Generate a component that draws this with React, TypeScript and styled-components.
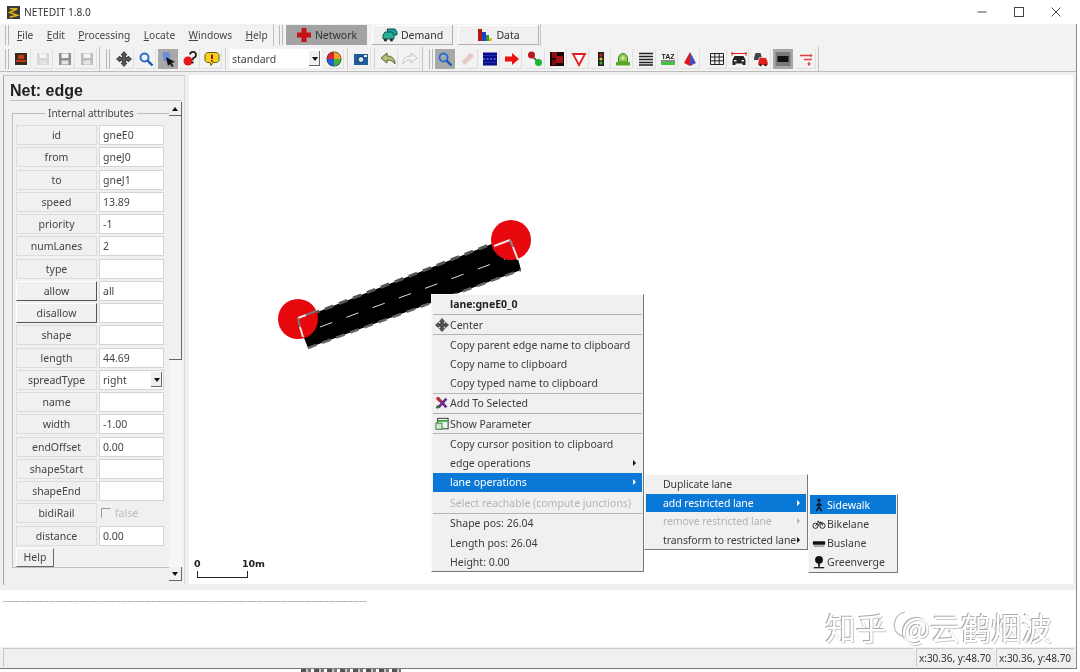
import React, { FC, ReactNode } from "react";
import styled, { createGlobalStyle } from "styled-components";

const GlobalStyle = createGlobalStyle`
  html, body {
    margin: 0;
    padding: 0;
    background: #ffffff;
  }
  body {
    font-family: "Noto Sans", "Liberation Sans", sans-serif;
    font-size: 11px;
    color: #2b2b2b;
  }
`;

const ATTRIBUTES: { name: string; value?: string; raised?: boolean; kind?: "select" | "check" }[] = [
  { name: "id", value: "gneE0" },
  { name: "from", value: "gneJ0" },
  { name: "to", value: "gneJ1" },
  { name: "speed", value: "13.89" },
  { name: "priority", value: "-1" },
  { name: "numLanes", value: "2" },
  { name: "type" },
  { name: "allow", value: "all", raised: true },
  { name: "disallow", raised: true },
  { name: "shape" },
  { name: "length", value: "44.69" },
  { name: "spreadType", value: "right", kind: "select" },
  { name: "name" },
  { name: "width", value: "-1.00" },
  { name: "endOffset", value: "0.00" },
  { name: "shapeStart" },
  { name: "shapeEnd" },
  { name: "bidiRail", value: "false", kind: "check" },
  { name: "distance", value: "0.00" },
];

const Icon: FC<{ children: ReactNode }> = ({ children }) => (
  <svg width="16" height="16" viewBox="0 0 16 16">
    {children}
  </svg>
);

const MoveGlyph = () => (
  <Icon>
    <path d="M8 0.5l3 3.5H9.5v2.5H12V5l3.5 3L12 11V9.5H9.5V12H11l-3 3.5L5 12h1.5V9.5H4V11L0.5 8 4 5v1.5h2.5V4H5z" fill="#555" stroke="#222" strokeWidth=".7" />
  </Icon>
);
const DiskGlyph: FC<{ tone: string }> = ({ tone }) => (
  <Icon>
    <rect x="2" y="2" width="12" height="12" fill={tone} />
    <rect x="4.5" y="2.5" width="7" height="4.5" fill="#f4f4f4" />
    <rect x="4.5" y="9.5" width="7" height="4" fill="#e4e4e4" />
  </Icon>
);
const SearchGlyph = () => (
  <Icon>
    <circle cx="6.5" cy="6.5" r="4" fill="none" stroke="#2a6fd0" strokeWidth="2" />
    <path d="M9.5 9.5l5 5" stroke="#1f55b5" strokeWidth="2.4" />
  </Icon>
);

const BarIcons: ReactNode[] = [
  <Icon key="a"><rect x="2" y="2" width="12" height="12" fill="#3a2a18" /><rect x="5" y="4" width="6" height="4" fill="#c23a1a" /><rect x="3" y="9" width="10" height="2" fill="#c23a1a" /></Icon>,
  <DiskGlyph key="b" tone="#d6d6d6" />,
  <DiskGlyph key="c" tone="#8f8f8f" />,
  <DiskGlyph key="d" tone="#bdbdbd" />,
];
const ViewIcons: ReactNode[] = [
  <MoveGlyph key="a" />,
  <SearchGlyph key="b" />,
  <Icon key="c"><path d="M3 1h6l2 5-2 1v3H3z" fill="#6f8ed8" /><path d="M6 6l9 5-3.5 1 2 3-1.5 1-2-3-2 2z" fill="#111" /></Icon>,
  <Icon key="d"><circle cx="6" cy="10" r="4.5" fill="#e01818" /><path d="M8 3.5a3 3 0 1 1 3.5 3.4L10.5 9" fill="none" stroke="#222" strokeWidth="1.8" /><rect x="9.5" y="10.5" width="2" height="2" fill="#222" /></Icon>,
  <Icon key="e"><path d="M3 1.5h10l2 2v6l-2 2H9l-2 3-1-3H3l-2-2v-6z" fill="#f2d21e" stroke="#6b5b10" /><rect x="7" y="3.5" width="2" height="4.5" fill="#b01010" /><rect x="7" y="9" width="2" height="1.6" fill="#b01010" /></Icon>,
];
const EditIcons: ReactNode[] = [
  <Icon key="a"><path d="M2 10l8-8 4 3-8 8H4z" fill="#e9c6c8" /><path d="M2 10l4 3-2 1z" fill="#cfd0d4" /></Icon>,
  <Icon key="b"><rect x="1" y="1.5" width="14" height="13" fill="#0a0a8c" /><path d="M1 8h14" stroke="#7fa8f4" strokeDasharray="2 1.5" /><path d="M1 4.5h14M1 11.5h14" stroke="#2030b0" /></Icon>,
  <Icon key="c"><path d="M1 5.5h7V2l7 6-7 6v-3.5H1z" fill="#f01010" /></Icon>,
  <Icon key="d"><path d="M4 4l9 9" stroke="#333" strokeWidth="1.4" /><circle cx="4.5" cy="4" r="3.5" fill="#b81818" /><circle cx="11.5" cy="11.5" r="3.5" fill="#18b830" /></Icon>,
  <Icon key="e"><rect x="1" y="1" width="14" height="14" fill="#1a0808" /><rect x="3" y="1" width="5" height="6" fill="#8c1010" /><rect x="7" y="5" width="7" height="7" fill="#a01414" /><rect x="3" y="9" width="4" height="5" fill="#7c0c0c" /></Icon>,
  <Icon key="f"><path d="M2 3h12L8 14z" fill="#fff" stroke="#e02020" strokeWidth="1.8" /></Icon>,
  <Icon key="g"><rect x="5" y="1" width="6" height="14" fill="#222" /><circle cx="8" cy="4" r="1.6" fill="#d02020" /><circle cx="8" cy="8" r="1.6" fill="#e0c020" /><circle cx="8" cy="12" r="1.6" fill="#20c020" /></Icon>,
  <Icon key="h"><path d="M3.5 11V7a4.500 4.500 0 0 1 9 0v4z" fill="#8cc850" stroke="#4c8c20" /><circle cx="8" cy="7" r="1.8" fill="#d8e8a0" /><rect x="1" y="11" width="14" height="3.5" fill="#58a828" /></Icon>,
  <Icon key="i"><path d="M1 2.5h14M1 5.5h14M1 8.500h14M1 11.5h14M1 14h14" stroke="#222" strokeWidth="1.5" /></Icon>,
  <Icon key="j"><rect x="1" y="11" width="14" height="3" fill="#3cc83c" /><path d="M1 10h14" stroke="#222" /><text x="8" y="8" textAnchor="middle" fontSize="7" fontWeight="700" fontFamily="Liberation Sans" fill="#222">TAZ</text></Icon>,
  <Icon key="k"><path d="M8 1l6 11-6 3z" fill="#3f4fc0" /><path d="M8 1L2 12l6 3z" fill="#e01a1a" /></Icon>,
];
const DataIcons: ReactNode[] = [
  <Icon key="a"><path d="M1.5 2.5h13v11h-13zM1.5 6h13M1.5 9.8h13M5.8 2.5v11M10.2 2.5v11" fill="none" stroke="#222" /></Icon>,
  <Icon key="b"><path d="M1 1v3.5M15 1v3.5M1 2.5h14" stroke="#e02020" strokeWidth="1.2" /><path d="M1.5 9l2-4h9l2 4v5h-3v-1.5h-7V14h-3z" fill="#222" /><rect x="3" y="9" width="2.5" height="1.5" fill="#eee" /><rect x="10.5" y="9" width="2.5" height="1.5" fill="#eee" /></Icon>,
  <Icon key="c"><path d="M1 7l1.5-5h5L9 7v2H1z" fill="#444" /><path d="M5 11l1.5-4.5h6.5L15 11v3.5H5z" fill="#e02020" stroke="#fff" strokeWidth=".6" /><circle cx="7.5" cy="14" r="1.2" fill="#222" /><circle cx="12.5" cy="14" r="1.2" fill="#222" /></Icon>,
  <Icon key="d"><rect x="0.5" y="1" width="15" height="14" fill="#7a7a7a" /><rect x="2.5" y="5" width="11" height="6" fill="#111" /></Icon>,
  <Icon key="e"><path d="M2 4.5h12M6 8.5h8M11 11v3" stroke="#e04040" strokeWidth="1.4" /><path d="M12.5 2.5l2 2-2 2zM9 12.5h4L11 15z" fill="#e04040" /></Icon>,
];

const App: FC = () => (
  <>
    <GlobalStyle />
    <Page>
      <Window>
        <TitleBar>
          <AppBadge viewBox="0 0 14 14">
            <rect width="14" height="14" fill="#3c3a34" />
            <path d="M3 3h8M11 3L3 7l8 3-8 2" fill="none" stroke="#d8b420" strokeWidth="1.8" />
          </AppBadge>
          <AppName>NETEDIT 1.8.0</AppName>
          <WindowControls>
            <svg width="12" height="12" viewBox="0 0 12 12"><path d="M1.5 6h9" stroke="#444" /></svg>
            <svg width="12" height="12" viewBox="0 0 12 12"><rect x="1.5" y="1.5" width="9" height="9" fill="none" stroke="#444" /></svg>
            <svg width="12" height="12" viewBox="0 0 12 12"><path d="M1.5 1.5l9 9M10.5 1.5l-9 9" stroke="#444" /></svg>
          </WindowControls>
        </TitleBar>

        <MenuBar>
          <BarGroup>
            <Grip />
            <MenuEntry><u>F</u>ile</MenuEntry>
            <MenuEntry><u>E</u>dit</MenuEntry>
            <MenuEntry><u>P</u>rocessing</MenuEntry>
            <MenuEntry><u>L</u>ocate</MenuEntry>
            <MenuEntry><u>W</u>indows</MenuEntry>
            <MenuEntry><u>H</u>elp</MenuEntry>
          </BarGroup>
          <SuperModes>
            <Grip />
            <ModeButton $active>
              <svg width="16" height="16" viewBox="0 0 16 16"><path d="M5.5 1h5v4.5H15v5h-4.5V15h-5v-4.5H1v-5h4.5z" fill="#c8101a" /></svg>
              Network
            </ModeButton>
            <ModeButton>
              <svg width="16" height="16" viewBox="0 0 16 16"><path d="M5 2h8l2 3v3H7z" fill="#18a0a0" stroke="#0b5050" /><path d="M1 8l2-3h7l2 3v4H1z" fill="#28b090" stroke="#0b5050" /><circle cx="3.5" cy="13" r="1.5" fill="#222" /><circle cx="9.5" cy="13" r="1.5" fill="#222" /></svg>
              Demand
            </ModeButton>
            <ModeButton>
              <svg width="16" height="16" viewBox="0 0 16 16"><rect x="1" y="2" width="4" height="12" fill="#b01818" /><rect x="5" y="5" width="4" height="9" fill="#2040c0" /><rect x="9" y="8" width="3" height="6" fill="#20a030" /><rect x="12" y="11" width="3" height="3" fill="#e0c020" /></svg>
              Data
            </ModeButton>
          </SuperModes>
        </MenuBar>

        <ToolBar>
          <ToolGrip />
          <ToolGroup>
            {BarIcons.map((icon, i) => <ToolButton key={i}>{icon}</ToolButton>)}
          </ToolGroup>
          <ToolDivider />
          <ToolGrip />
          <ViewGroup>
            {ViewIcons.map((icon, i) => <ToolButton key={i} $active={i === 2}>{icon}</ToolButton>)}
          </ViewGroup>
          <ToolRule />
          <SchemeSelect>
            <span>standard</span>
            <SelectArrow><Triangle /></SelectArrow>
          </SchemeSelect>
          <ToolButton>
            <svg width="16" height="16" viewBox="0 0 16 16">
              <circle cx="8" cy="8" r="7.5" fill="#222" />
              <path d="M8 8V1a7 7 0 0 1 7 7z" fill="#f0a020" />
              <path d="M8 8h7a7 7 0 0 1-7 7z" fill="#40b040" />
              <path d="M8 8v7a7 7 0 0 1-7-7z" fill="#2060d0" />
              <path d="M8 8H1a7 7 0 0 1 7-7z" fill="#e02030" />
            </svg>
          </ToolButton>
          <ToolRule />
          <ToolButton>
            <svg width="16" height="16" viewBox="0 0 16 16"><rect x="1" y="3" width="14" height="11" fill="#1f5c9c" /><circle cx="8" cy="8.5" r="3" fill="#cfe4f8" stroke="#0c3060" /><rect x="11" y="4" width="3" height="2" fill="#e8f0f8" /></svg>
          </ToolButton>
          <ToolRule />
          <ToolButton>
            <svg width="16" height="16" viewBox="0 0 16 16"><path d="M1 7l6-5v3c5 0 8 3 8 8-2-3-4-4-8-4v3z" fill="#b8c078" stroke="#5a6030" /></svg>
          </ToolButton>
          <ToolButton>
            <svg width="16" height="16" viewBox="0 0 16 16"><path d="M15 7L9 2v3C4 5 1 8 1 13c2-3 4-4 8-4v3z" fill="#f4f4f4" stroke="#c4c4c4" /></svg>
          </ToolButton>
          <ToolDivider />
          <ToolGrip />
          <ToolButton $active><SearchGlyph /></ToolButton>
          <EditGroup>
            {EditIcons.map((icon, i) => <ToolButton key={i}>{icon}</ToolButton>)}
          </EditGroup>
          <DataGroup>
            {DataIcons.map((icon, i) => <ToolButton key={i} $active={i === 3}>{icon}</ToolButton>)}
          </DataGroup>
          <ToolDivider />
        </ToolBar>

        <Body>
          <SidePanel>
            <PanelTitle>Net: edge</PanelTitle>
            <PanelScroller>
              <AttributesBox>
                <legend>Internal attributes</legend>
                {ATTRIBUTES.map((attr) => (
                  <AttrRow key={attr.name}>
                    <AttrLabel $raised={attr.raised}>{attr.name}</AttrLabel>
                    {attr.kind === "check" ? (
                      <CheckValue><CheckMark />{attr.value}</CheckValue>
                    ) : (
                      <AttrValue>
                        {attr.value}
                        {attr.kind === "select" && <SelectArrow><Triangle /></SelectArrow>}
                      </AttrValue>
                    )}
                  </AttrRow>
                ))}
                <HelpButton>Help</HelpButton>
              </AttributesBox>
              <ScrollBar>
                <ScrollButton><Triangle $up /></ScrollButton>
                <ScrollThumb />
                <ScrollTrack />
                <ScrollButton><Triangle /></ScrollButton>
              </ScrollBar>
            </PanelScroller>
          </SidePanel>

          <Canvas>
            <RoadDrawing viewBox="189 75 884 509" width="884" height="509">
              <path d="M297 320L512 236L521 270L308 348Z" fill="#000" />
              <path d="M297 320L512 236" stroke="#555" strokeWidth="3" strokeDasharray="9 6" />
              <path d="M308 348L521 270" stroke="#666" strokeWidth="2.5" strokeDasharray="9 6" />
              <path d="M320 327L505 259" stroke="#ddd" strokeWidth="1" strokeDasharray="13 15" />
              <circle cx="298" cy="319" r="20" fill="#e6080d" />
              <circle cx="511" cy="240" r="20" fill="#e6080d" />
              <path d="M298 318l8-3" stroke="#f4e4e4" strokeWidth="2" />
              <path d="M306 315l10-4" stroke="#777" strokeWidth="2" />
              <path d="M298 318l2 9" stroke="#777" strokeWidth="2" />
              <path d="M300 327l3 10" stroke="#f4e4e4" strokeWidth="2" />
              <path d="M494 246l16-6" stroke="#f4e4e4" strokeWidth="2" />
              <path d="M510 240l3 7" stroke="#888" strokeWidth="2" />
              <path d="M513 247l5 13" stroke="#f4e4e4" strokeWidth="2" />
            </RoadDrawing>
            <ScaleBar>
              <ScaleLabels><span>0</span><span>10m</span></ScaleLabels>
              <ScaleLine />
            </ScaleBar>
          </Canvas>

          <Menu $left={431} $top={294} $width={213}>
            <MenuTitle>lane:gneE0_0</MenuTitle>
            <MenuRule />
            <MenuItem $icon>
              <ItemIcon><MoveGlyph /></ItemIcon>Center
            </MenuItem>
            <MenuRule />
            <MenuItem>Copy parent edge name to clipboard</MenuItem>
            <MenuItem>Copy name to clipboard</MenuItem>
            <MenuItem>Copy typed name to clipboard</MenuItem>
            <MenuRule />
            <MenuItem $icon>
              <ItemIcon>
                <Icon><path d="M3 2l10 11M13 3L4 13" stroke="#6a2a90" strokeWidth="3" /><path d="M2 2l4 4" stroke="#c03020" strokeWidth="3" /><path d="M4 11l-2 3" stroke="#208030" strokeWidth="3" /></Icon>
              </ItemIcon>
              Add To Selected
            </MenuItem>
            <MenuRule />
            <MenuItem $icon>
              <ItemIcon>
                <Icon><rect x="3" y="1.5" width="12" height="12" fill="#e8f4e8" stroke="#222" /><path d="M3 4.5h12" stroke="#40a040" strokeWidth="2" /><rect x="1" y="7" width="7" height="7" fill="#d0e8d0" stroke="#308030" /></Icon>
              </ItemIcon>
              Show Parameter
            </MenuItem>
            <MenuRule />
            <MenuItem>Copy cursor position to clipboard</MenuItem>
            <MenuItem $arrow>edge operations</MenuItem>
            <MenuItem $selected $arrow>lane operations</MenuItem>
            <MenuRule $gap />
            <MenuItem $disabled>Select reachable (compute junctions)</MenuItem>
            <MenuRule />
            <MenuItem>Shape pos: 26.04</MenuItem>
            <MenuItem>Length pos: 26.04</MenuItem>
            <MenuItem>Height: 0.00</MenuItem>
          </Menu>

          <SubMenu $left={644} $top={474} $width={164}>
            <MenuItem>Duplicate lane</MenuItem>
            <MenuItem $selected $arrow>add restricted lane</MenuItem>
            <MenuItem $disabled $arrow>remove restricted lane</MenuItem>
            <MenuItem $arrow>transform to restricted lane</MenuItem>
          </SubMenu>

          <Menu $left={808} $top={494} $width={90}>
            <MenuItem $selected $icon>
              <ItemIcon>
                <Icon><circle cx="8" cy="2.5" r="1.8" fill="#111" /><path d="M8 5v5M8 6l-3 3M8 6l3 3M8 10l-3 5M8 10l3 5" stroke="#111" strokeWidth="1.6" fill="none" /></Icon>
              </ItemIcon>
              Sidewalk
            </MenuItem>
            <MenuItem $icon>
              <ItemIcon>
                <Icon><circle cx="4" cy="10" r="3" fill="none" stroke="#111" /><circle cx="12" cy="10" r="3" fill="none" stroke="#111" /><path d="M4 10l3-4h4l1 4M6 5h2M7 10l3-4" stroke="#111" fill="none" /></Icon>
              </ItemIcon>
              Bikelane
            </MenuItem>
            <MenuItem $icon>
              <ItemIcon>
                <Icon><rect x="1" y="6" width="14" height="4" rx="1" fill="#111" /><path d="M2 11.5h12" stroke="#555" /></Icon>
              </ItemIcon>
              Buslane
            </MenuItem>
            <MenuItem $icon>
              <ItemIcon>
                <Icon><circle cx="8" cy="5.5" r="4.5" fill="#111" /><path d="M8 9v4.5" stroke="#111" strokeWidth="2" /><path d="M2 14.5h12" stroke="#111" strokeWidth="1.4" /></Icon>
              </ItemIcon>
              Greenverge
            </MenuItem>
          </Menu>
        </Body>

        <Messages>
          <MessageLine>{"-".repeat(152)}</MessageLine>
          <Watermark>
            <WatermarkSwirl viewBox="0 0 18 30" width="18" height="30">
              <path d="M14 2C5 4 2 12 4 20c2 4 6 6 10 7" fill="none" stroke="#bbb" strokeWidth="1.2" />
            </WatermarkSwirl>
            知乎 @云鹤烟波
          </Watermark>
        </Messages>

        <StatusBar>
          <StatusFill />
          <StatusCell>x:30.36, y:48.70</StatusCell>
          <StatusCell>x:30.36, y:48.70</StatusCell>
        </StatusBar>
      </Window>
      <CutOffStrip />
    </Page>
  </>
);

export default App;

const Page = styled.div`
  width: 1080px;
  height: 672px;
  overflow: hidden;
  background: #ffffff;
  filter: blur(0.3px);
`;

const Window = styled.div`
  width: 1077px;
  height: 669px;
  display: flex;
  flex-direction: column;
  background: #f0f0f0;
  border-right: 1px solid #8a8a8a;
  border-bottom: 1px solid #777;
  box-sizing: border-box;
`;

const CutOffStrip = styled.div`
  width: 100px;
  height: 3px;
  margin-left: 301px;
  background: repeating-linear-gradient(90deg, #555 0 5px, #c8c8c8 5px 7px, #777 7px 10px, #ffffff 10px 13px);
`;

const TitleBar = styled.div`
  flex: 0 0 24px;
  display: flex;
  align-items: center;
  background: #ffffff;
  padding-left: 7px;
  width: 1080px;
  box-sizing: border-box;
`;

const AppBadge = styled.svg`
  width: 13px;
  height: 13px;
  margin-right: 4px;
`;

const AppName = styled.span`
  font-size: 10.2px;
  color: #333;
`;

const WindowControls = styled.div`
  margin-left: auto;
  display: flex;
  gap: 25px;
  padding-right: 18px;
  align-items: center;
`;

const MenuBar = styled.div`
  flex: 0 0 22px;
  display: flex;
  align-items: center;
  background: #f2f2f2;
  box-sizing: border-box;
  padding-left: 5px;
`;

const BarGroup = styled.div`
  display: flex;
  align-items: center;
  height: 100%;
  width: 268px;
  border-right: 1px solid #c4c4c4;
`;

const SuperModes = styled.div`
  display: flex;
  align-items: center;
  height: 100%;
  padding-left: 5px;
  gap: 5px;
  border-right: 1px solid #c4c4c4;
  padding-right: 1px;

  > :first-child {
    margin-right: -2px;
  }
`;

const Grip = styled.div`
  flex: none;
  width: 2px;
  height: 20px;
  border-left: 1px solid #b8b8b8;
  border-right: 1px solid #b8b8b8;
  margin-right: 3px;
`;

const ToolGrip = styled(Grip)`
  margin-right: 1px;
`;

const MenuEntry = styled.span`
  padding: 0 5px;
  font-size: 10.2px;
  color: #444;
  margin-right: 3.4px;
`;

const ModeButton = styled.button<{ $active?: boolean }>`
  width: 81px;
  height: 20px;
  display: flex;
  align-items: center;
  justify-content: center;
  gap: 3px;
  padding: 0;
  font: inherit;
  font-size: 10.5px;
  color: #333;
  border: none;
  background: ${(props) => (props.$active ? "#a3a3a3" : "#f0f0f0")};
  box-shadow: ${(props) =>
    props.$active ? "none" : "inset -1px -1px 0 #b0b0b0, inset 1px 1px 0 #ffffff"};
`;

const ToolBar = styled.div`
  flex: 0 0 26px;
  display: flex;
  align-items: center;
  padding-left: 5px;
  box-sizing: border-box;
  background: #f2f2f2;
  border-bottom: 1px solid #bdbdbd;
`;

const ToolGroup = styled.div`
  display: flex;
  align-items: center;
`;

const ViewGroup = styled(ToolGroup)`
  margin-left: 2px;
`;

const EditGroup = styled(ToolGroup)`
  margin-left: 1px;
  gap: 0.2px;
`;

const DataGroup = styled(ToolGroup)`
  margin-left: 5px;
  gap: 0.2px;
`;

const ToolDivider = styled.div`
  flex: none;
  width: 0;
  height: 24px;
  border-right: 1px solid #c0c0c0;
  margin: 0 6px 0 1px;
`;

const ToolRule = styled.div`
  flex: none;
  width: 0;
  height: 22px;
  border-right: 1px solid #d0d0d0;
  margin: 0 2px;
`;

const ToolButton = styled.div<{ $active?: boolean }>`
  flex: none;
  width: 22px;
  height: 22px;
  box-sizing: border-box;
  display: flex;
  align-items: center;
  justify-content: center;
  border: 1px solid transparent;
  background-clip: padding-box;
  background-color: ${(props) => (props.$active ? "#a8a8a8" : "transparent")};
  box-shadow: ${(props) => (props.$active ? "none" : "inset -1px -1px 0 #e0e0e0")};
`;

const SchemeSelect = styled.div`
  flex: none;
  width: 91px;
  height: 19px;
  margin: 0 2px;
  box-sizing: border-box;
  display: flex;
  align-items: center;
  justify-content: space-between;
  padding-left: 2px;
  background: #ffffff;
  color: #444;
  font-size: 10.5px;
`;

const SelectArrow = styled.span`
  width: 11px;
  height: 15px;
  margin-right: 1px;
  display: flex;
  align-items: center;
  justify-content: center;
  background: #f0f0f0;
  box-shadow: inset -1px -1px 0 #666;
`;

const Triangle = styled.span<{ $up?: boolean }>`
  width: 0;
  height: 0;
  border-left: 3.5px solid transparent;
  border-right: 3.5px solid transparent;
  ${(props) =>
    props.$up ? "border-bottom: 4px solid #111;" : "border-top: 4px solid #111;"}
`;

const Body = styled.div`
  flex: 0 0 518px;
  position: relative;
  display: flex;
  align-items: flex-start;
  padding-top: 3px;
  box-sizing: border-box;
`;

const SidePanel = styled.div`
  width: 182px;
  height: 510px;
  margin-left: 3px;
  box-sizing: border-box;
  border-left: 1px solid #a8a8a8;
  border-top: 1px solid #c8c8c8;
  border-right: 1px solid #d8d8d8;
  flex: none;
`;

const PanelTitle = styled.div`
  font-family: "Liberation Sans", sans-serif;
  font-size: 16px;
  font-weight: 700;
  color: #222;
  height: 24px;
  line-height: 29px;
  margin: 0 3px 0 6px;
  border-bottom: 1px solid #c0c0c0;
`;

const PanelScroller = styled.div`
  display: flex;
  padding-left: 8px;
  padding-top: 1px;
  height: 479px;
`;

const AttributesBox = styled.fieldset`
  flex: none;
  width: 157px;
  height: 461px;
  margin: 5px 0 0;
  padding: 6px 0 0 3px;
  box-sizing: border-box;
  border: 1px solid #bdbdbd;
  border-right: none;
  min-width: 0;

  legend {
    font-size: 10px;
    color: #444;
    padding: 0 3px;
    margin-left: 29px;
    line-height: 12px;
  }
`;

const AttrRow = styled.div`
  display: flex;
  gap: 2px;
  height: 20px;
  margin-bottom: 2.25px;
`;

const AttrLabel = styled.div<{ $raised?: boolean }>`
  width: 81px;
  box-sizing: border-box;
  display: flex;
  align-items: center;
  justify-content: center;
  font-size: 10.5px;
  color: #444;
  background: #f0f0f0;
  border: 1px solid #dcdcdc;
  ${(props) => props.$raised && "border-color: #ffffff #555 #555 #ffffff;"}
`;

const AttrValue = styled.div`
  width: 65px;
  box-sizing: border-box;
  display: flex;
  align-items: center;
  justify-content: space-between;
  padding-left: 3px;
  font-size: 10.5px;
  color: #444;
  background: #ffffff;
  border: 1px solid #d4d4d4;
`;

const CheckValue = styled.div`
  width: 65px;
  display: flex;
  align-items: center;
  gap: 4px;
  padding-left: 2px;
  font-size: 10.5px;
  color: #bcbcbc;
`;

const CheckMark = styled.span`
  width: 8px;
  height: 8px;
  border-left: 1px solid #9a9a9a;
  border-top: 1px solid #9a9a9a;
  border-right: 1px solid #eee;
  border-bottom: 1px solid #eee;
`;

const HelpButton = styled.div`
  width: 38px;
  height: 19px;
  margin-top: 1px;
  box-sizing: border-box;
  display: flex;
  align-items: center;
  justify-content: center;
  font-size: 10.5px;
  color: #444;
  border: 1px solid;
  border-color: #ffffff #666 #666 #ffffff;
`;

const ScrollBar = styled.div`
  flex: none;
  width: 13px;
  display: flex;
  flex-direction: column;
  height: 479px;
`;

const ScrollButton = styled.div`
  flex: 0 0 14px;
  box-sizing: border-box;
  display: flex;
  align-items: center;
  justify-content: center;
  background: #f0f0f0;
  border-right: 1px solid #666;
  border-bottom: 1px solid #666;
`;

const ScrollThumb = styled.div`
  flex: 0 0 244px;
  box-sizing: border-box;
  background: #f0f0f0;
  border-right: 1px solid #666;
  border-bottom: 1px solid #666;
`;

const ScrollTrack = styled.div`
  flex: 1;
  background: #f6f6f6;
`;

const Canvas = styled.div`
  flex: none;
  position: relative;
  width: 884px;
  height: 509px;
  margin-left: 4px;
  background: #ffffff;
  overflow: hidden;
`;

const RoadDrawing = styled.svg`
  display: block;
`;

const ScaleBar = styled.div`
  position: absolute;
  left: 5px;
  bottom: 6px;
  width: 71px;
`;

const ScaleLabels = styled.div`
  display: flex;
  justify-content: space-between;
  font-family: "DejaVu Sans", sans-serif;
  font-size: 9.5px;
  font-weight: 700;
  color: #222;
  line-height: 13px;
`;

const ScaleLine = styled.div`
  height: 7px;
  margin: 1px 0 0 3px;
  width: 51px;
  box-sizing: border-box;
  border: 1px solid #222;
  border-top: none;
`;

const Menu = styled.div<{ $left: number; $top: number; $width: number }>`
  position: absolute;
  left: ${(props) => props.$left}px;
  top: ${(props) => props.$top - 72}px;
  width: ${(props) => props.$width}px;
  box-sizing: border-box;
  background: #f0f0f0;
  border-right: 1px solid #777;
  border-bottom: 1px solid #777;
  border-top: 1px solid #fafafa;
  border-left: 1px solid #fafafa;
  padding: 0 1px;
`;

const SubMenu = styled(Menu)`
  letter-spacing: -0.1px;

  > div {
    height: 18.6px;
  }
`;

const MenuTitle = styled.div`
  height: 19px;
  line-height: 19px;
  padding-left: 17px;
  font-size: 10.5px;
  font-weight: 700;
  color: #222;
`;

const MenuRule = styled.div<{ $gap?: boolean }>`
  height: 0;
  border-top: 1px solid #b4b4b4;
  ${(props) => props.$gap && "border-color: transparent;"}
  margin-bottom: ${(props) => (props.$gap ? 1 : 0)}px;
`;

const MenuItem = styled.div<{
  $selected?: boolean;
  $disabled?: boolean;
  $arrow?: boolean;
  $icon?: boolean;
}>`
  position: relative;
  height: 19.2px;
  display: flex;
  align-items: center;
  padding-left: ${(props) => (props.$icon ? 0 : 17)}px;
  font-size: 10.5px;
  white-space: nowrap;
  color: ${(props) =>
    props.$selected ? "#ffffff" : props.$disabled ? "#b4b4b4" : "#3c3c3c"};
  background: ${(props) => (props.$selected ? "#0a78d7" : "transparent")};

  ${(props) =>
    props.$arrow &&
    `&::after {
      content: "";
      position: absolute;
      right: 6px;
      top: 50%;
      margin-top: -3px;
      border-top: 3px solid transparent;
      border-bottom: 3px solid transparent;
      border-left: 3.5px solid ${
        props.$selected ? "#ffffff" : props.$disabled ? "#b4b4b4" : "#111"
      };
    }`}
`;

const ItemIcon = styled.span`
  flex: none;
  width: 17px;
  height: 16px;
  display: flex;
  align-items: center;
  justify-content: center;
  svg {
    width: 14px;
    height: 14px;
  }
`;

const Messages = styled.div`
  flex: 0 0 57px;
  position: relative;
  background: #ffffff;
  padding: 0 0 0 3px;
`;

const MessageLine = styled.div`
  font-family: "Liberation Sans", sans-serif;
  font-size: 7.2px;
  line-height: 21px;
  color: #666;
  white-space: nowrap;
`;

const Watermark = styled.div`
  position: absolute;
  right: 24px;
  bottom: 0;
  font-family: "Noto Sans CJK SC", sans-serif;
  font-size: 30.5px;
  line-height: 40px;
  word-spacing: 8px;
  color: #ffffff;
  text-shadow: -1px -1px 0 #aaa, 1px 1px 0 #ccc;
  white-space: nowrap;
`;

const WatermarkSwirl = styled.svg`
  position: absolute;
  left: 66px;
  top: 3px;
`;

const StatusBar = styled.div`
  flex: 1;
  display: flex;
  gap: 2px;
  padding: 1px 2px 1px 3px;
  box-sizing: border-box;
  background: #f0f0f0;
`;

const StatusFill = styled.div`
  flex: 1;
  border: 1px solid #c8c8c8;
  border-right-color: #eee;
  border-bottom-color: #eee;
`;

const StatusCell = styled.div`
  flex: none;
  width: 78px;
  box-sizing: border-box;
  display: flex;
  align-items: center;
  justify-content: center;
  font-size: 10px;
  color: #333;
  white-space: nowrap;
  border: 1px solid #c8c8c8;
  border-right-color: #eee;
  border-bottom-color: #eee;
`;
